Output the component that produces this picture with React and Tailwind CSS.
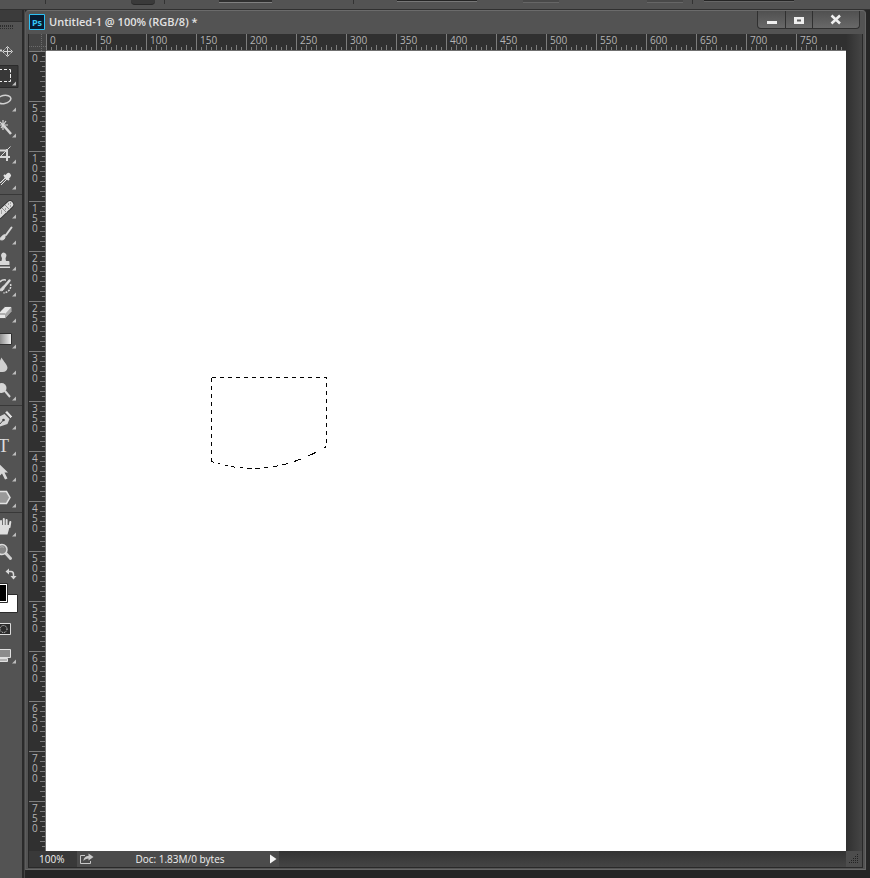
import React from 'react';

const MARKS = [0, 50, 100, 150, 200, 250, 300, 350, 400, 450, 500, 550, 600, 650, 700, 750];
const STEPS = [5, 10, 15, 20, 25, 30, 35, 40, 45];

/* Tool icons are drawn in a 19x26 box; the dock is half off the left edge */
const ICONS = {
  move: (
    <g fill="none" stroke="#d6d6d6">
      <path d="M7.5 9.5v8M3.5 13.5h8" />
      <path d="M5.5 10.5l2-2 2 2M5.5 16.5l2 2 2-2M4.5 11.5l-2 2 2 2M10.5 11.5l2 2-2 2" />
      <path d="M0 12.5h2" strokeWidth="2" />
    </g>
  ),
  marquee: (
    <g fill="none" stroke="#efefef">
      <path d="M0 5.5h2M4 5.5h3M9 5.5h1.5v3M10.5 10v4M10.5 15.5v2h-2M4 17.5h3M0 17.5h2" />
    </g>
  ),
  lasso: (
    <g fill="none" stroke="#d0d0d0" strokeWidth="1.5">
      <ellipse cx="4" cy="9.5" rx="7" ry="4" transform="rotate(-12 4 9.5)" />
    </g>
  ),
  wand: (
    <g stroke="#d6d6d6">
      <path d="M4 10l7 8" strokeWidth="2.5" />
      <path d="M3 4v10M-1 9h9M0 6l6 6M6 5l-5 7" strokeWidth="1.2" />
    </g>
  ),
  crop: (
    <g fill="none" stroke="#d6d6d6">
      <path d="M7 7v12M0 15h10" strokeWidth="2" />
      <path d="M0 8.5h7" strokeWidth="2" />
      <path d="M10.5 4.5L0 15" />
    </g>
  ),
  eyedropper: (
    <g stroke="#e2e2e2">
      <path d="M8.5 7.5L7 9" strokeWidth="5" strokeLinecap="round" />
      <path d="M4 7l5 5" strokeWidth="2" />
      <path d="M5.5 9.5L0 15M7 11l-6 6" />
      <path d="M5 11l-4 4" stroke="#8a8a8a" />
    </g>
  ),
  heal: (
    <g>
      <path d="M-1 18L10 7.5" stroke="#333" strokeWidth="8" strokeLinecap="round" />
      <path d="M-1 18L10 7.5" stroke="#dcdcdc" strokeWidth="6.5" strokeLinecap="round" />
      <path d="M2 11l5 5M5 8l5 5" stroke="#8a8a8a" />
      <path d="M8 7h1M10 9h1M10 6h1M1 16h1M1 14h1M5 12h1" stroke="#666" />
    </g>
  ),
  brush: (
    <g stroke="#d8d8d8" strokeLinecap="round">
      <path d="M11.5 4.500L6 12" strokeWidth="2" />
      <path d="M5 12c-3-1-3 3-6 4 3 2 7 1 6-4z" fill="#d8d8d8" />
    </g>
  ),
  stamp: (
    <g fill="#d8d8d8">
      <path d="M3.500 3.500a3 3 0 0 1 2.500 4.500c-1 2 0 3 0 4h2.500a1 1 0 0 1 1 1v3H0v-4h1.500c0-1 1-2 0-4a3 3 0 0 1 2-4.500z" />
      <path d="M0 17.500h10v1.500H0z" />
    </g>
  ),
  history: (
    <g fill="none" stroke="#d8d8d8">
      <path d="M9.500 5.500L4 12" strokeWidth="2.500" strokeLinecap="round" />
      <path d="M4 11c-2 0-2 3-5 4 3 2 6 0 5-4z" fill="#d8d8d8" />
      <path d="M0 7c2-3 5-2 6-2" strokeWidth="1.500" />
      <path d="M10.500 9c1 4-1 8-7 9" strokeWidth="1.500" strokeDasharray="2 1" />
    </g>
  ),
  eraser: (
    <g>
      <path d="M5 5.500h6.500v5L5 17.500H-2v-5z" fill="#e6e6e6" stroke="#303030" strokeWidth=".6" />
      <path d="M11.500 6v4.500L5 17.500v-4.500z" fill="#a6a6a6" />
      <path d="M0 13h5" stroke="#777" />
    </g>
  ),
  gradient: (
    <g>
      <defs>
        <linearGradient id="ramp" x1="0" x2="1">
          <stop offset="0" stopColor="#858585" />
          <stop offset="1" stopColor="#f4f4f4" />
        </linearGradient>
      </defs>
      <path d="M-1 6.500h12.500v11H-1z" fill="url(#ramp)" stroke="#303030" />
    </g>
  ),
  blur: <path d="M1.500 4.500c2 4 6 7 6 10.500a5 5 0 0 1-5 4H-1V10z" fill="#cfcfcf" />,
  dodge: (
    <g>
      <circle cx="1.500" cy="9" r="5" fill="#d6d6d6" />
      <path d="M5 12l5 6" stroke="#d6d6d6" strokeWidth="2" />
    </g>
  ),
  pen: (
    <g>
      <path d="M7 2.500l5.500 6-2 2L5 4.500z" fill="#e2e2e2" stroke="#333" strokeWidth=".5" />
      <path d="M4.500 6l5 5-2 5-9 3V9z" fill="#d4d4d4" />
      <circle cx="3.500" cy="12" r="1.300" fill="#444" />
      <path d="M3 12.500L-1 17" stroke="#444" />
    </g>
  ),
  arrow: <path d="M-3 2l11 10.500H4.500l3 6-2.500 1-3-6-3 3z" fill="#d8d8d8" />,
  shape: <path d="M-2 5.500h8.500l3.500 6-3.500 6H-2z" fill="#999" stroke="#e2e2e2" strokeWidth="1.500" />,
  hand: (
    <g fill="none" stroke="#dedede" strokeLinecap="round">
      <path d="M1 12V6M3.800 11V4M6.600 11V5M9.500 12l.8-5" strokeWidth="2" />
      <path d="M-1 10h11l-1.500 6-1 3.500H0z" fill="#dedede" stroke="none" />
    </g>
  ),
  zoom: (
    <g>
      <path d="M6 12.500l4.500 5" stroke="#d0d0d0" strokeWidth="3" strokeLinecap="round" />
      <circle cx="2" cy="8.500" r="5" fill="#858585" stroke="#dcdcdc" strokeWidth="1.500" />
      <path d="M0 6.500c1-1 3-1 4 0" stroke="#b0b0b0" fill="none" />
    </g>
  ),
};

const TOOL_GROUPS = [
  [
    { id: 'move', label: 'Move', flat: true },
    { id: 'marquee', label: 'Rectangular marquee', active: true },
    { id: 'lasso', label: 'Lasso' },
    { id: 'wand', label: 'Magic wand' },
    { id: 'crop', label: 'Crop' },
    { id: 'eyedropper', label: 'Eyedropper' },
  ],
  [
    { id: 'heal', label: 'Healing brush' },
    { id: 'brush', label: 'Brush' },
    { id: 'stamp', label: 'Clone stamp' },
    { id: 'history', label: 'History brush' },
    { id: 'eraser', label: 'Eraser' },
    { id: 'gradient', label: 'Gradient' },
    { id: 'blur', label: 'Blur' },
    { id: 'dodge', label: 'Dodge' },
  ],
  [
    { id: 'pen', label: 'Pen' },
    { id: 'type', label: 'Type' },
    { id: 'arrow', label: 'Path selection' },
    { id: 'shape', label: 'Shape' },
  ],
  [
    { id: 'hand', label: 'Hand' },
    { id: 'zoom', label: 'Zoom', flat: true },
  ],
];

function Tool({ id, label, active, flat }) {
  return (
    <button
      aria-label={label}
      aria-pressed={Boolean(active)}
      className="relative block h-[26px] w-[19px]"
    >
      <svg className="block" width="19" height="26" viewBox="0 0 19 26">
        {active && <path d="M-1 1.500h19v22H-1z" fill="#383838" stroke="#2a2a2a" />}
        {ICONS[id]}
        {!flat && <path d="M16 17.500v4h-4z" fill="#bdbdbd" />}
      </svg>
      {id === 'type' && (
        <span className="absolute top-0 -left-[2px] font-['Liberation_Serif',serif] text-lg leading-6 text-[#dedede]">T</span>
      )}
    </button>
  );
}

function Toolbar() {
  return (
    <aside className="flex w-[22px] shrink-0 flex-col bg-[#535353]">
      <div className="h-3 border-b border-[#303030] bg-[#3b3b3b]" />
      <svg className="mt-[3px] block" width="14" height="5" viewBox="0 0 14 5">
        <path d="M0 .5h14M0 1.500h14M0 3.500h14" stroke="#2c2c2c" strokeDasharray="1 1" />
      </svg>
      <div className="pt-2">
        {TOOL_GROUPS.map((group, i) => (
          <div key={group[0].id} className={i > 0 ? 'border-t border-[#383838] pt-[2px]' : ''}>
            {group.map((tool) => (
              <Tool key={tool.id} {...tool} />
            ))}
          </div>
        ))}
      </div>
      <button aria-label="Swap colours" className="h-[15px] w-[19px]">
        <svg className="block" width="19" height="15" viewBox="0 0 19 15" fill="none" stroke="#d8d8d8">
          <path d="M7 4.500h4q2.500 0 2.500 3V10" strokeWidth="1.500" />
          <path d="M9 1.500v6l-3.500-3zM10.500 9h6l-3 3.500z" fill="#d8d8d8" stroke="none" />
        </svg>
      </button>
      <button aria-label="Foreground and background colour" className="h-8 w-[19px]">
        <svg className="block" width="19" height="32" viewBox="0 0 19 32">
          <path d="M-1 12.500h18.500v18H-1z" fill="#fff" stroke="#2b2b2b" />
          <path d="M-1 1.500h8.500v19H-1z" fill="#fff" stroke="#2b2b2b" />
          <path d="M0 3h6v16H0z" fill="#000" />
        </svg>
      </button>
      <button aria-label="Quick mask" className="mt-2 h-4 w-[19px]">
        <svg className="block" width="19" height="16" viewBox="0 0 19 16">
          <path d="M-1 1.500h11.500v11H-1z" fill="#2c2c2c" stroke="#dcdcdc" />
          <circle cx="3.500" cy="7" r="3.500" fill="none" stroke="#e8e8e8" strokeDasharray="1 1" />
        </svg>
      </button>
      <button aria-label="Screen mode" className="mt-2 h-[26px] w-[19px]">
        <svg className="block" width="19" height="26" viewBox="0 0 19 26">
          <path d="M-1 12.500h8.500v3H-1z" fill="#b5b5b5" stroke="#e0e0e0" />
          <path d="M-1 3.500h11.500v8H-1z" fill="#8c8c8c" stroke="#e0e0e0" />
          <path d="M16 13.500v4h-4z" fill="#bdbdbd" />
        </svg>
      </button>
    </aside>
  );
}

/* Bottom edge of the options bar controls */
function OptionsBar() {
  return (
    <div className="flex h-[9px] shrink-0 items-start overflow-hidden bg-[#535353]">
      <div className="ml-[45px] h-1 w-px bg-[#333]" />
      <div className="ml-[85px] h-[5px] w-6 rounded-b-sm border-b border-[#292929] bg-[#3a3a3a]" />
      <div className="ml-[9px] h-1 w-px bg-[#333]" />
      <div className="ml-[54px] h-[3px] w-[53px] border-b border-[#808080] bg-[#303030]" />
      <div className="ml-[81px] h-1 w-px bg-[#333]" />
      <div className="ml-[43px] h-[2px] w-20 border-b border-[#777] bg-[#252525]" />
      <div className="ml-[46px] h-[3px] w-9 border-b border-[#666] bg-[#494949]" />
      <div className="ml-[88px] h-[3px] w-9 border-b border-[#666] bg-[#494949]" />
      <div className="ml-[9px] h-1 w-px bg-[#333]" />
      <div className="ml-[11px] h-[2px] w-[90px] border-b border-[#666] bg-[#252525]" />
    </div>
  );
}

function TitleBar() {
  return (
    <header className="flex h-[23px] items-start pl-[3px]">
      <svg className="mt-[3px] shrink-0" width="16" height="16" viewBox="0 0 16 16">
        <path d="M.5.5h15v15H.5z" fill="#071c33" stroke="#2cc0f5" />
        <text x="8" y="11.500" textAnchor="middle" fontFamily="Open Sans, sans-serif" fontSize="9" fontWeight="700" fill="#35c5f5">Ps</text>
      </svg>
      <h1 className="ml-1 grow truncate pt-[3px] text-[11px] leading-4 font-semibold text-[#e2e2e2]">Untitled-1 @ 100% (RGB/8) *</h1>
      <div className="mr-[5px] flex h-[18px] shrink-0 divide-x divide-[#303030] rounded-b border border-t-0 border-[#303030] bg-linear-to-b from-[#505050] to-[#696969]">
        <button aria-label="Minimize" className="flex w-7 justify-center">
          <svg width="16" height="17" viewBox="0 0 16 17"><path d="M3 10h10v3H3z" fill="#efefef" /></svg>
        </button>
        <button aria-label="Maximize" className="flex w-[27px] justify-center">
          <svg width="16" height="17" viewBox="0 0 16 17"><path d="M3 6h10v7H3zM6 8.500v2h4v-2z" fill="#efefef" fillRule="evenodd" /></svg>
        </button>
        <button aria-label="Close" className="flex w-[46px] justify-center">
          <svg width="16" height="17" viewBox="0 0 16 17"><path d="M3.500 4.500l8.500 8M12 4.500l-8.500 8" stroke="#efefef" strokeWidth="2.500" /></svg>
        </button>
      </div>
    </header>
  );
}

function HorizontalRuler() {
  return (
    <div className="flex h-[17px] min-w-0 grow overflow-hidden border-b border-[#6f6f6f] bg-[#303030]">
      {MARKS.map((mark) => (
        <div key={mark} className="relative w-[50px] shrink-0">
          <svg className="block" width="50" height="16" viewBox="0 0 50 16" stroke="#7d7d7d">
            <path d="M.5 0v16" />
            {STEPS.map((s) => (
              <path key={s} d={`M${s + 0.5} ${s % 10 ? 13 : 11}v5`} />
            ))}
          </svg>
          <span className="absolute top-0 left-1 text-[10px] leading-3 text-[#b4b4b4]">{mark}</span>
        </div>
      ))}
    </div>
  );
}

function VerticalRuler() {
  return (
    <div className="w-[17px] shrink-0 overflow-hidden border-r border-[#6f6f6f] bg-[#303030]">
      {MARKS.map((mark) => (
        <div key={mark} className="relative h-[50px]">
          <svg className="block" width="16" height="50" viewBox="0 0 16 50" stroke="#7d7d7d">
            <path d="M0 .5h16" />
            {STEPS.map((s) => (
              <path key={s} d={`M${s % 10 ? 13 : 11} ${s + 0.5}h5`} />
            ))}
          </svg>
          <span className="absolute top-[2px] left-[3px] w-[6px] text-[10px] leading-[10px] break-all text-[#b4b4b4]">{mark}</span>
        </div>
      ))}
    </div>
  );
}

function StatusBar() {
  return (
    <footer className="flex h-4 shrink-0 text-[10px] leading-4 text-[#f0f0f0]">
      <label className="flex w-12 shrink-0 bg-[#393939] pl-[10px]">
        <span className="sr-only">Zoom level</span>
        <input className="h-4 w-full min-w-0 bg-transparent leading-[14px] outline-none" defaultValue="100%" />
      </label>
      <div className="flex w-[202px] shrink-0 items-center bg-[#4b4b4b]">
        <button aria-label="Share" className="ml-[3px]">
          <svg className="block" width="14" height="12" viewBox="0 0 14 12">
            <path d="M5 2.500H.5v8h10V8" fill="none" stroke="#c8c8c8" />
            <path d="M3.500 8c0-3 2-5 5-5V.5L13.500 4 8.500 7.500V5.500c-2 0-4 1-5 2.500z" fill="#c8c8c8" />
          </svg>
        </button>
        <span className="grow pr-1 text-center">Doc: 1.83M/0 bytes</span>
        <button aria-label="Status options" className="mr-[2px]">
          <svg className="block" width="7" height="10" viewBox="0 0 7 10"><path d="M0 .5v9L6.500 5z" fill="#f4f4f4" /></svg>
        </button>
      </div>
      <div className="grow bg-linear-to-b from-[#333] to-[#454545]" />
      <svg className="shrink-0 bg-[#4d4d4d]" width="16" height="16" viewBox="0 0 16 16" fill="none" stroke="#222" strokeDasharray="1 1">
        <path d="M11 3.500h1M9 5.500h3M7 7.500h5M5 9.500h7M3 11.500h9" />
      </svg>
    </footer>
  );
}

function DocumentWindow() {
  return (
    <main className="mr-1 mb-2 flex min-w-0 grow flex-col rounded-t border border-t-[#6b6b6b] border-r-[#656565] border-b-[#686868] border-l-[#5d5d5d] bg-[#535353]">
      <TitleBar />
      <div className="mr-[2px] mb-px ml-[2px] flex min-h-0 grow flex-col border-r border-b border-l border-[#292929]">
        <div className="flex min-h-0 grow">
          <div className="flex min-w-0 grow flex-col">
            <div className="flex shrink-0">
              <svg className="shrink-0 bg-[#454545]" width="17" height="17" viewBox="0 0 17 17" stroke="#6c6c6c" strokeDasharray="1 1">
                <path d="M0 12.500h17M12.500 0v17" />
              </svg>
              <HorizontalRuler />
            </div>
            <div className="flex min-h-0 grow">
              <VerticalRuler />
              <div className="relative grow bg-white">
                {/* active selection */}
                <svg className="absolute top-[325px] left-[164px]" width="120" height="96" viewBox="0 0 120 96" fill="none" stroke="#000" shapeRendering="crispEdges">
                  <path d="M1.500 1.500h115v69" strokeDasharray="4 4" />
                  <path d="M1.500 1.500v84" strokeDasharray="4 4" />
                  <path
                    d="M1.500 85.500C42 99 80 92 116.500 70.500"
                    strokeDasharray="3 4 2 5 3 3 4 5 3 4 5 3 5 4 4 5 5 5 6 6 8 7 9 9 6 9"
                  />
                </svg>
              </div>
            </div>
          </div>
          <div className="w-4 shrink-0 bg-linear-to-r from-[#303030] to-[#454545]" />
        </div>
        <StatusBar />
      </div>
    </main>
  );
}

export default function App() {
  return (
    <div className="flex h-screen flex-col overflow-hidden bg-[#262626] font-['Open_Sans','Noto_Sans',sans-serif]">
      <OptionsBar />
      <div className="flex min-h-0 grow border-t border-[#303030]">
        <Toolbar />
        <div className="w-[3px] shrink-0 border-r border-[#454545] bg-[#2b2b2b]" />
        <DocumentWindow />
      </div>
    </div>
  );
}
